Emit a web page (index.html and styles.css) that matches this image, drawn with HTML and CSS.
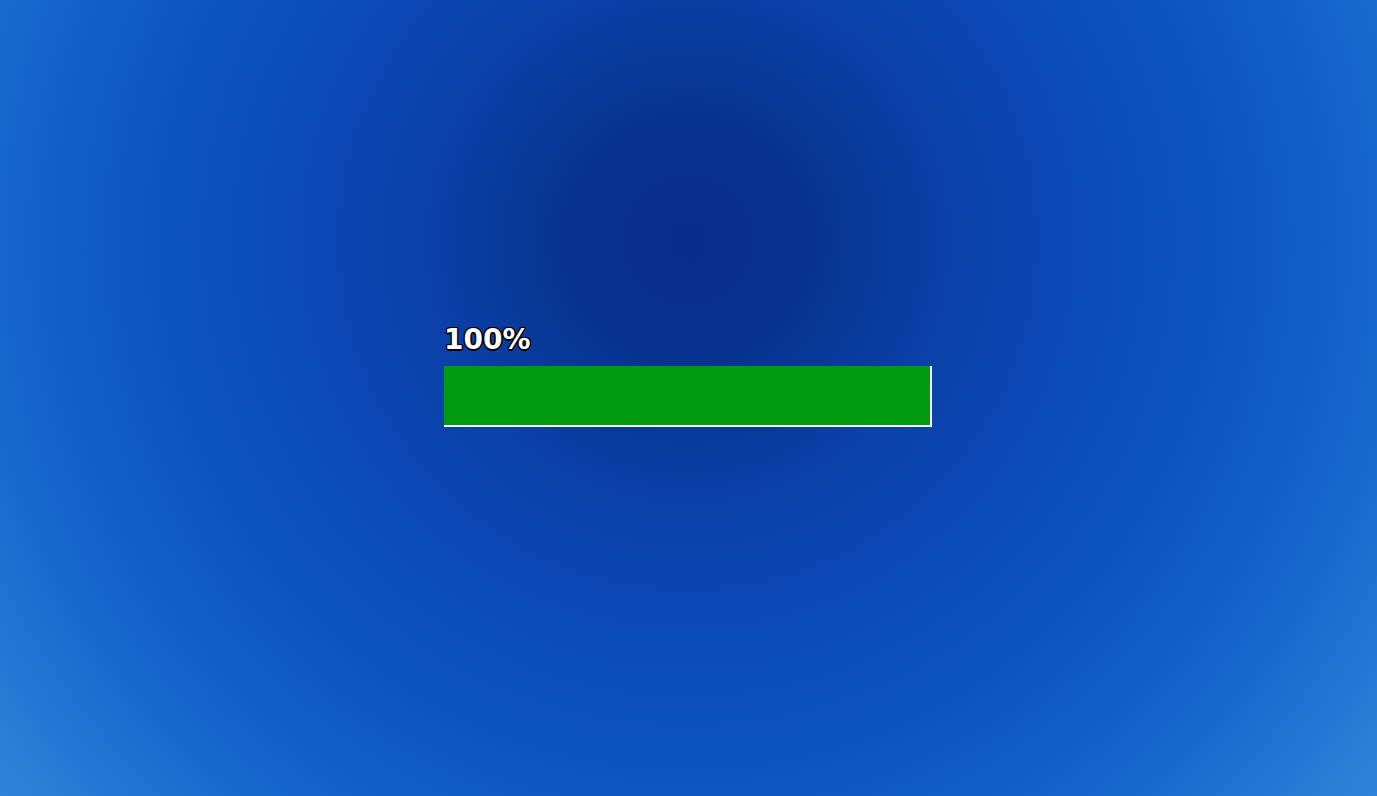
FILE: index.html
```html
<!DOCTYPE html>
<html lang="en">
<head>
<meta charset="utf-8">
<title>Loading</title>
<link rel="stylesheet" href="styles.css">
</head>
<body>
<main class="screen">
  <div class="loader">
    <div class="percent">100%</div>
    <div class="bar"><div class="fill" style="width:100%"></div></div>
  </div>
</main>
</body>
</html>
```

FILE: styles.css
```css
html, body {
  margin: 0;
  padding: 0;
  height: 100%;
}
body {
  overflow: hidden;
  font-family: "DejaVu Sans", sans-serif;
}
.screen {
  width: 100vw;
  height: 100vh;
  display: flex;
  justify-content: flex-start;
  padding-left: 444px;
  box-sizing: border-box;
  background: radial-gradient(circle at 688px 240px,
    #062d8a 0px,
    #07338f 120px,
    #0a3fa6 250px,
    #0b4bb8 400px,
    #0b54c0 520px,
    #1360c8 650px,
    #1c6dcf 740px,
    #2e80d8 860px,
    #3288dc 950px);
}
.loader {
  width: 488px;
  padding-top: 322px;
  display: flex;
  flex-direction: column;
}
.percent {
  color: #fff;
  font-size: 28px;
  font-weight: bold;
  line-height: 36px;
  height: 44px;
  margin-left: 0;
  text-shadow:
    -1px -1px 0 #000, 1px -1px 0 #000, -1px 1px 0 #000, 1px 1px 0 #000,
    0 -1px 0 #000, 0 1px 0 #000, -1px 0 0 #000, 1px 0 0 #000,
    0 1.5px 0 #000, 1.5px 0 0 #000;
}
.bar {
  width: 488px;
  height: 61px;
  box-sizing: border-box;
  border-right: 2px solid #fff;
  border-bottom: 2px solid #fff;
}
.fill {
  height: 100%;
  background: #029a13;
}
```
